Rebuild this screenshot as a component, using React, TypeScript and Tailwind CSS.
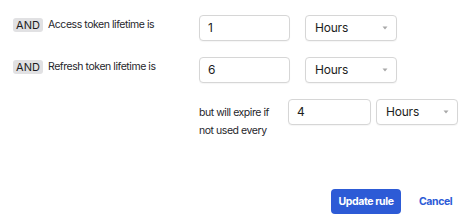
import React from 'react';

const Caret = () => (
  <svg width="6" height="4" viewBox="0 0 6 4" className="text-[#a8a8a8]">
    <path d="M0.5 0.5 L5.5 0.5 L3 3.5 Z" fill="currentColor" />
  </svg>
);

const TextInput = ({ value, w }: { value: string; w: string }) => (
  <div className={`${w} h-[26px] border border-[#d6d6d6] rounded-[4px] bg-white flex items-center pl-[8px] text-[12px] text-[#1d1d21] shadow-[0_1px_1px_rgba(0,0,0,0.04)]`}>
    {value}
  </div>
);

const Select = ({ w }: { w: string }) => (
  <div className={`${w} h-[26px] border border-[#d6d6d6] rounded-[4px] bg-white flex items-center justify-between pl-[9px] pr-[8px] text-[12px] tracking-[-0.2px] text-[#1d1d21] shadow-[0_1px_1px_rgba(0,0,0,0.04)]`}>
    <span>Hours</span>
    <Caret />
  </div>
);

const Rule = ({ label, value }: { label: string; value: string }) => (
  <div className="flex items-start">
    <div className="w-[186px] flex items-center pt-[2px] gap-[5px]">
      <span className="h-[14px] w-[30px] bg-[#e1e1e3] rounded-[3px] flex items-center justify-center text-[11px] text-[#1d1d21]">AND</span>
      <span className="text-[10.5px] tracking-[-0.45px] text-[#26262b]">{label}</span>
    </div>
    <TextInput value={value} w="w-[91px]" />
    <div className="w-[15px]" />
    <Select w="w-[92px]" />
  </div>
);

export default function App() {
  return (
    <div className="w-[474px] h-[214px] bg-white pl-[13px] pt-[15px] font-['Inter',sans-serif] overflow-hidden">
      <div className="flex flex-col gap-[16px]">
        <Rule label="Access token lifetime is" value="1" />
        <Rule label="Refresh token lifetime is" value="6" />
        <div className="flex items-start pl-[186px]">
          <div className="w-[89px] text-[10.5px] tracking-[-0.45px] leading-[18px] text-[#26262b] pt-[5px]">
            but will expire if
            <br />
            not used every
          </div>
          <TextInput value="4" w="w-[83px]" />
          <div className="w-[5px]" />
          <Select w="w-[82px]" />
        </div>
      </div>
      <div className="flex items-center mt-[49px] pl-[318px]">
        <button className="w-[70px] h-[25px] rounded-[4px] bg-[#2d5bd6] text-white text-[10.5px] tracking-[-0.4px] font-bold">Update rule</button>
        <span className="ml-[18px] text-[10.5px] tracking-[-0.4px] font-bold text-[#2d5bd6]">Cancel</span>
      </div>
    </div>
  );
}
